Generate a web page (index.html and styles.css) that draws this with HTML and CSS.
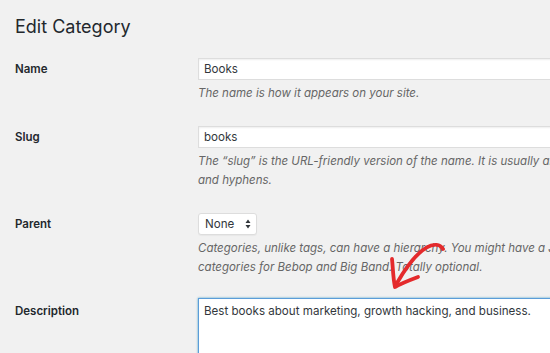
FILE: index.html
```html
<!DOCTYPE html>
<html lang="en">
<head>
    <meta charset="UTF-8">
    <meta name="viewport" content="width=device-width, initial-scale=1.0">
    <title>Edit Category</title>
    <link rel="stylesheet" href="styles.css">
</head>
<body>
    <div class="wrap">
        <h1>Edit Category</h1>

        <form class="form-table">
            <div class="form-row">
                <label for="tag-name">Name</label>
                <div class="field">
                    <input type="text" id="tag-name" value="Books">
                    <p class="description">The name is how it appears on your site.</p>
                </div>
            </div>

            <div class="form-row">
                <label for="slug">Slug</label>
                <div class="field">
                    <input type="text" id="slug" value="books">
                    <p class="description">The “slug” is the URL-friendly version of the name. It is usually all lowercase and contains only letters, numbers, and hyphens.</p>
                </div>
            </div>

            <div class="form-row">
                <label for="parent">Parent</label>
                <div class="field">
                    <span class="select-wrap">
                        <select id="parent">
                            <option>None</option>
                        </select>
                        <svg class="select-arrows" viewBox="0 0 6 10" width="6" height="10">
                            <path d="M3 0.5 L5.5 4 H0.5 Z M3 9.5 L5.5 6 H0.5 Z" fill="#32373c"/>
                        </svg>
                    </span>
                    <p class="description">Categories, unlike tags, can have a hierarchy. You might have a Jazz category, and under that have children categories for Bebop and Big Band. Totally optional.</p>
                </div>
            </div>

            <div class="form-row term-description">
                <label for="description">Description</label>
                <div class="field">
                    <textarea id="description" rows="5">Best books about marketing, growth hacking, and business.</textarea>
                </div>
            </div>
        </form>
    </div>

    <!-- hand drawn arrow on top of the screenshot -->
    <svg class="annotation" viewBox="0 0 550 353" width="550" height="353">
        <g fill="none" stroke="#e42a2c" stroke-width="3.8" stroke-linecap="round" stroke-linejoin="round">
            <path d="M443 249 C437 240 420 243 397 283"/>
            <path d="M392 259 C393 268 393 278 395 287 C402 283 410 280 418 277"/>
        </g>
    </svg>
</body>
</html>
```

FILE: styles.css
```css
:root {
    --bg-color: #f1f1f1;
    --text-color: #23282d;
    --text-light: #666666;
    --input-text: #32373c;
    --border-color: #dddddd;
    --focus-color: #5b9dd9;
}

* {
    margin: 0;
    padding: 0;
    box-sizing: border-box;
    font-family: Inter, 'Liberation Sans', sans-serif;
}

html, body {
    width: 550px;
    height: 353px;
    overflow: hidden;
}

body {
    background-color: var(--bg-color);
    color: var(--text-color);
    position: relative;
}

.wrap {
    padding: 15px 0 0 15px;
    width: 820px;
}

h1 {
    font-size: 18px;
    font-weight: 400;
    line-height: 23px;
    margin-bottom: 20px;
}

.form-table {
    display: flex;
    flex-direction: column;
    gap: 23px;
}

.form-row {
    display: grid;
    grid-template-columns: 183px 620px;
}

.form-row.term-description {
    margin-top: -2px;
}

.form-row label {
    font-size: 11.5px;
    font-weight: 600;
    line-height: 22px;
}

.term-description label {
    line-height: 26px;
}

.field input,
.field textarea {
    display: block;
    width: 560px;
    background-color: #fff;
    border: 1px solid var(--border-color);
    box-shadow: inset 0 1px 2px rgba(0, 0, 0, 0.07);
    color: var(--input-text);
    font-size: 11.6px;
    outline: none;
}

.field input {
    height: 22px;
    padding: 0 5px;
}

.field textarea {
    height: 90px;
    padding: 5px 5px;
    line-height: 15px;
    resize: none;
    border-color: var(--focus-color);
    box-shadow: 0 0 2px rgba(30, 140, 190, 0.8);
}

.description {
    margin-top: 4px;
    font-size: 11.5px;
    font-style: italic;
    line-height: 19px;
    color: var(--text-light);
}

.select-wrap {
    position: relative;
    display: inline-block;
    vertical-align: top;
}

.select-wrap select {
    appearance: none;
    -webkit-appearance: none;
    display: block;
    width: 59px;
    height: 22px;
    padding: 0 6px;
    background-color: #fff;
    border: 1px solid var(--border-color);
    border-radius: 3px;
    box-shadow: 0 1px 1px rgba(0, 0, 0, 0.04);
    color: var(--input-text);
    font-size: 11.6px;
}

.select-arrows {
    position: absolute;
    right: 6px;
    top: 6px;
    pointer-events: none;
}

.annotation {
    position: absolute;
    top: 0;
    left: 0;
    pointer-events: none;
}
```
